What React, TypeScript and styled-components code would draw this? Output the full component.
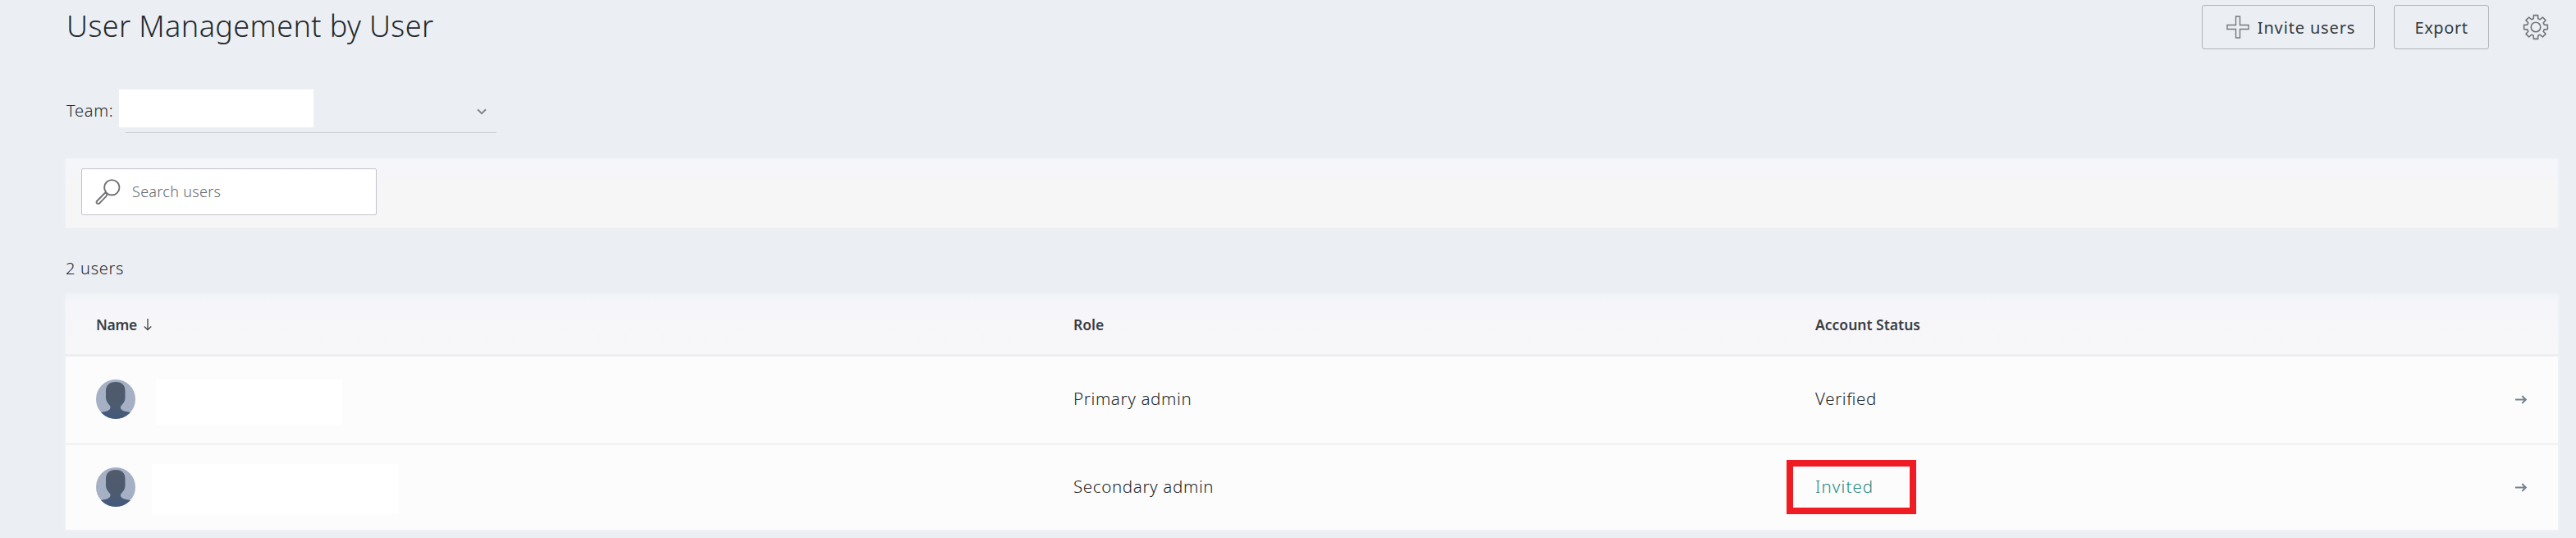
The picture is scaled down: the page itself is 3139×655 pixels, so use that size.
import React from 'react';
import styled, { createGlobalStyle } from 'styled-components';

const GlobalStyle = createGlobalStyle`
  * { box-sizing: border-box; }
  body {
    margin: 0;
    background: #ebeff4;
    color: #24282c;
    font-family: "Noto Sans", "Open Sans", sans-serif;
    font-weight: 350;
    overflow: hidden;
  }
`;

const Page = styled.main`
  height: 655px;
  padding: 6px 22px 0 80px;
  display: flex;
  flex-direction: column;
`;

const Header = styled.header`
  height: 54px;
  display: flex;
  justify-content: space-between;
`;

const Title = styled.h1`
  margin: 1px 0 0 1px;
  font-size: 36px;
  line-height: 50px;
  font-weight: 300;
  letter-spacing: 0.4px;
  color: #25292d;
  white-space: nowrap;
`;

const Actions = styled.div`
  display: flex;
  align-items: center;
  gap: 23px;
  padding-right: 11px;
`;

const Button = styled.button<{ $width: number; $spacing: number; $indent?: number }>`
  width: ${(p) => p.$width}px;
  height: 54px;
  padding: 0 0 0 ${(p) => p.$indent ?? 0}px;
  border: 1px solid #b0b5ba;
  border-radius: 3px;
  background: transparent;
  display: flex;
  align-items: center;
  justify-content: center;
  gap: 10px;
  font: 400 20px "Noto Sans", sans-serif;
  letter-spacing: ${(p) => p.$spacing}px;
  color: #34393e;
`;

const SettingsButton = styled.button`
  width: 32px;
  height: 32px;
  margin-left: 18px;
  padding: 0;
  border: 0;
  background: transparent;
  display: flex;
`;

const TeamBar = styled.div`
  height: 53px;
  margin-top: 49px;
  display: flex;
`;

const TeamLabel = styled.span`
  width: 65px;
  padding-left: 1px;
  font-size: 20px;
  line-height: 52px;
  letter-spacing: 0.75px;
`;

const TeamSelect = styled.div`
  width: 460px;
  height: 53px;
  display: flex;
  align-items: center;
  justify-content: space-between;
  padding: 0 12px 7px 0;
  background: linear-gradient(#c8cdd3, #c8cdd3) 8px 100% / 452px 1px no-repeat;

  > svg { margin-top: 7px; }
`;

const Redacted = styled.div<{ $width: number; $height: number; $drop?: number }>`
  width: ${(p) => p.$width}px;
  height: ${(p) => p.$height}px;
  margin-top: ${(p) => p.$drop ?? 0}px;
  background: #fff;
`;

const SearchPanel = styled.section`
  height: 84px;
  margin-top: 31px;
  padding: 12px 19px;
  background: linear-gradient(#f5f6fa 0, #f5f5fa 22px, #f6f6f7 22px);
  box-shadow: 0 0 3px #f1f4f7;
`;

const SearchField = styled.label`
  width: 360px;
  height: 57px;
  padding-left: 16px;
  padding-bottom: 1px;
  border: 1px solid #c2c4cb;
  border-radius: 2px;
  background: #fff;
  display: flex;
  align-items: center;
  gap: 14px;
  font-size: 18px;
  letter-spacing: 0.3px;
  color: #66696d;
`;

const Count = styled.p`
  margin: 33px 0 0;
  height: 48px;
  font-size: 20px;
  line-height: 34px;
  letter-spacing: 0.7px;
`;

const Table = styled.section`
  height: 287px;
  background: #fcfcfd;
  box-shadow: 0 0 3px #f3f6f9;
`;

const TableRow = styled.div<{ $height: number }>`
  height: ${(p) => p.$height}px;
  display: grid;
  grid-template-columns: 1191px 904px 1fr 14px;
  align-items: center;
  padding: 0 38px 1px 37px;
  border-bottom: 3px solid #f3f3f6;

  &:last-child { border-bottom: 0; }
`;

const HeadRow = styled(TableRow)`
  padding-top: 2px;
  background: linear-gradient(#eff4f7, #f6f6fa 14px, #f7f7f9);
  border-bottom: 3px solid #ececf1;
  font-size: 17.5px;
  font-weight: 600;
  color: #3a3e43;
`;

const HeadCell = styled.div<{ $spacing?: number }>`
  display: flex;
  align-items: center;
  gap: 8px;
  letter-spacing: ${(p) => p.$spacing ?? 0}px;
`;

const Cell = styled.div<{ $spacing?: number }>`
  padding-bottom: 2px;
  font-size: 20.5px;
  letter-spacing: ${(p) => p.$spacing ?? 0.65}px;
  font-feature-settings: "liga" 1;
`;

const UserCell = styled.div<{ $gap: number }>`
  display: flex;
  align-items: center;
  gap: ${(p) => p.$gap}px;
`;

const StatusCell = styled(Cell)`
  position: relative;
  color: #258880;
`;

const Highlight = styled.div`
  position: absolute;
  left: -35px;
  top: 50%;
  width: 158px;
  height: 66px;
  margin-top: -33px;
  border: 8px solid #ef1c24;
`;

const gearPath = (() => {
  const points: string[] = [];
  for (let i = 0; i < 8; i++) {
    const base = (i * Math.PI) / 4 - Math.PI / 2;
    const corners: [number, number][] = [
      [-0.27, 10.6],
      [-0.18, 14.6],
      [0.18, 14.6],
      [0.27, 10.6],
    ];
    corners.forEach(([offset, r]) => {
      points.push(
        `${(16 + r * Math.cos(base + offset)).toFixed(2)} ${(16 + r * Math.sin(base + offset)).toFixed(2)}`,
      );
    });
  }
  return `M${points.join('L')}Z`;
})();

const GearIcon = () => (
  <svg width="32" height="32" viewBox="0 0 32 32" fill="none" stroke="#6f7479" strokeWidth="1.6" strokeLinejoin="round">
    <path d={gearPath} />
    <circle cx="16" cy="16" r="5.8" />
  </svg>
);

const PlusIcon = () => (
  <svg width="28" height="28" viewBox="0 0 28 28" fill="none" stroke="#73787d" strokeWidth="1.4">
    <path d="M11.5 1H16.5V11.5H27V16.5H16.5V27H11.5V16.5H1V11.5H11.5Z" />
  </svg>
);

const ChevronIcon = () => (
  <svg width="12" height="8" viewBox="0 0 12 8" fill="none" stroke="#82878c" strokeWidth="2">
    <path d="M1 1.2L6 6.2L11 1.2" />
  </svg>
);

const SearchIcon = () => (
  <svg width="31" height="31" viewBox="0 0 31 31" fill="none" stroke="#707276" strokeWidth="1.9" strokeLinejoin="round">
    <circle cx="20.3" cy="10.3" r="9.2" />
    <path d="M13.8 16.8L11.8 17L1.9 27Q1 28.6 2.3 29.6Q3.6 30.7 5 29.6L14.2 20.1L14 16.8" />
  </svg>
);

const SortIcon = () => (
  <svg width="10" height="15" viewBox="0 0 10 15" fill="none" stroke="#45494e" strokeWidth="1.4">
    <path d="M5 0V13.4M0.8 9.4L5 13.6L9.2 9.4" />
  </svg>
);

const ArrowIcon = () => (
  <svg width="14" height="11" viewBox="0 0 14 11" fill="none" stroke="#75818d" strokeWidth="1.9">
    <path d="M0 5.5H12.6M8.3 1L12.8 5.5L8.3 10" />
  </svg>
);

const Avatar = ({ id }: { id: string }) => (
  <svg width="48" height="48" viewBox="0 0 48 48">
    <defs>
      <clipPath id={`${id}-clip`}><circle cx="24" cy="24" r="24" /></clipPath>
      <linearGradient id={`${id}-body`} x1="0" y1="0" x2="0" y2="1">
        <stop offset="0" stopColor="#505b6b" />
        <stop offset="0.65" stopColor="#4d5b70" />
        <stop offset="1" stopColor="#41597f" />
      </linearGradient>
    </defs>
    <g clipPath={`url(#${id}-clip)`}>
      <rect width="48" height="48" fill="#a5b0c4" />
      <path
        d="M24 3C16 3 12 7 12 14V22C12 27 15 29 17.500 33C18 37 14 39 6 40V48H42V40C34 39 29 37 30 33C33 29 35.500 27 35.500 22V14C35.500 7 32 3 24 3Z"
        fill={`url(#${id}-body)`}
      />
    </g>
  </svg>
);

export default function App() {
  return (
    <>
      <GlobalStyle />
      <Page>
        <Header>
          <Title>User Management by User</Title>
          <Actions>
            <Button $width={211} $spacing={0.85} $indent={6}>
              <PlusIcon />
              Invite users
            </Button>
            <Button $width={116} $spacing={0.6}>Export</Button>
            <SettingsButton aria-label="Settings"><GearIcon /></SettingsButton>
          </Actions>
        </Header>

        <TeamBar>
          <TeamLabel>Team:</TeamLabel>
          <TeamSelect>
            <Redacted $width={237} $height={46} />
            <ChevronIcon />
          </TeamSelect>
        </TeamBar>

        <SearchPanel>
          <SearchField>
            <SearchIcon />
            Search users
          </SearchField>
        </SearchPanel>

        <Count>2 users</Count>

        <Table>
          <HeadRow $height={76}>
            <HeadCell $spacing={-0.3}>Name <SortIcon /></HeadCell>
            <HeadCell>Role</HeadCell>
            <HeadCell>Account Status</HeadCell>
          </HeadRow>
          <TableRow $height={108}>
            <UserCell $gap={25}>
              <Avatar id="primary" />
              <Redacted $width={227} $height={56} $drop={7} />
            </UserCell>
            <Cell>Primary admin</Cell>
            <Cell>Verified</Cell>
            <ArrowIcon />
          </TableRow>
          <TableRow $height={103}>
            <UserCell $gap={20}>
              <Avatar id="secondary" />
              <Redacted $width={301} $height={61} $drop={5} />
            </UserCell>
            <Cell>Secondary admin</Cell>
            <StatusCell $spacing={1.1}>
              Invited
              <Highlight />
            </StatusCell>
            <ArrowIcon />
          </TableRow>
        </Table>
      </Page>
    </>
  );
}
